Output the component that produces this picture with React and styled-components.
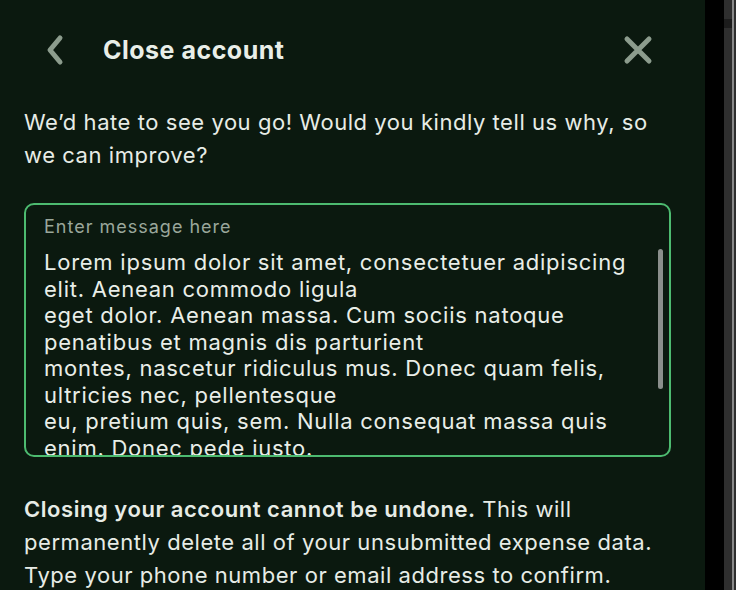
import React from "react";
import styled, { createGlobalStyle } from "styled-components";

const GlobalStyle = createGlobalStyle`
  html, body {
    margin: 0;
    padding: 0;
    background: #000;
  }
  body {
    font-family: Inter, "Liberation Sans", sans-serif;
    -webkit-font-smoothing: antialiased;
  }
`;

const Screen = styled.div`
  display: flex;
  width: 736px;
  height: 590px;
  overflow: hidden;
`;

const Panel = styled.div`
  width: 705px;
  flex-shrink: 0;
  background: #0b190f;
  color: #e7ece6;
  padding: 0 24px;
  box-sizing: border-box;
`;

const Gutter = styled.div`
  width: 19px;
  background: #000;
`;

const Rail = styled.div`
  position: relative;
  flex: 1;
  display: flex;
  background: #2e2e2e;

  &::before {
    content: "";
    position: absolute;
    left: 0;
    right: 4px;
    top: 19px;
    height: 9px;
    background: #1c1c1c;
  }
`;

const RailEdge = styled.div`
  margin-left: auto;
  width: 2px;
  background: #8a8a8a;
  margin-right: 2px;
`;

const Header = styled.header`
  display: flex;
  align-items: center;
  height: 100px;
  padding: 0 28px 0 16px;
`;

const IconButton = styled.button`
  display: flex;
  align-items: center;
  justify-content: center;
  width: 30px;
  height: 30px;
  padding: 0;
  border: 0;
  background: none;
  color: #8c9c8d;
  cursor: pointer;
`;

const Title = styled.h1`
  margin: 0 0 0 33px;
  flex: 1;
  font-size: 25px;
  font-weight: 700;
  letter-spacing: 0.5px;
  color: #e9eee8;
`;

const Intro = styled.p`
  margin: 6px 0 0;
  font-size: 22px;
  line-height: 33px;
  letter-spacing: 0.55px;
`;

const MessageBox = styled.div`
  position: relative;
  margin-top: 31px;
  width: 647px;
  height: 254px;
  box-sizing: border-box;
  border: 2px solid #4dbb70;
  border-radius: 10px;
  padding: 10px 24px 0 18px;
  display: flex;
  flex-direction: column;
  overflow: hidden;
`;

const Label = styled.label`
  font-size: 18px;
  line-height: 24px;
  letter-spacing: 1px;
  color: #9aa79b;
`;

const MessageText = styled.div`
  margin-top: 10px;
  font-size: 22px;
  line-height: 26.5px;
  letter-spacing: 0.75px;
  color: #e9eee8;
  white-space: pre-line;
`;

const ScrollThumb = styled.div`
  position: absolute;
  right: 6px;
  top: 44px;
  width: 5px;
  height: 140px;
  border-radius: 3px;
  background: #8b8f8c;
`;

const Warning = styled.p`
  margin: 36px 0 0;
  font-size: 22px;
  line-height: 33px;
  letter-spacing: 0.55px;

  strong {
    font-weight: 600;
  }
`;

const message = `Lorem ipsum dolor sit amet, consectetuer adipiscing elit. Aenean commodo ligula
eget dolor. Aenean massa. Cum sociis natoque penatibus et magnis dis parturient
montes, nascetur ridiculus mus. Donec quam felis, ultricies nec, pellentesque
eu, pretium quis, sem. Nulla consequat massa quis enim. Donec pede justo.`;

export default function App() {
  return (
    <>
      <GlobalStyle />
      <Screen>
        <Panel>
          <Header>
            <IconButton aria-label="Back">
              <svg width="24" height="32" viewBox="0 0 24 32" fill="none">
                <path
                  d="M17 4 L7 16 L17 28"
                  stroke="currentColor"
                  strokeWidth="5"
                  strokeLinecap="round"
                  strokeLinejoin="round"
                />
              </svg>
            </IconButton>
            <Title>Close account</Title>
            <IconButton aria-label="Close">
              <svg width="30" height="30" viewBox="0 0 30 30" fill="none">
                <path
                  d="M4 4 L26 26 M26 4 L4 26"
                  stroke="currentColor"
                  strokeWidth="5"
                  strokeLinecap="round"
                />
              </svg>
            </IconButton>
          </Header>
          <Intro>
            We’d hate to see you go! Would you kindly tell us why, so we can
            improve?
          </Intro>
          <MessageBox>
            <Label>Enter message here</Label>
            <MessageText>{message}</MessageText>
            <ScrollThumb />
          </MessageBox>
          <Warning>
            <strong>Closing your account cannot be undone.</strong> This will
            permanently delete all of your unsubmitted expense data. Type your
            phone number or email address to confirm.
          </Warning>
        </Panel>
        <Gutter />
        <Rail>
          <RailEdge />
        </Rail>
      </Screen>
    </>
  );
}
